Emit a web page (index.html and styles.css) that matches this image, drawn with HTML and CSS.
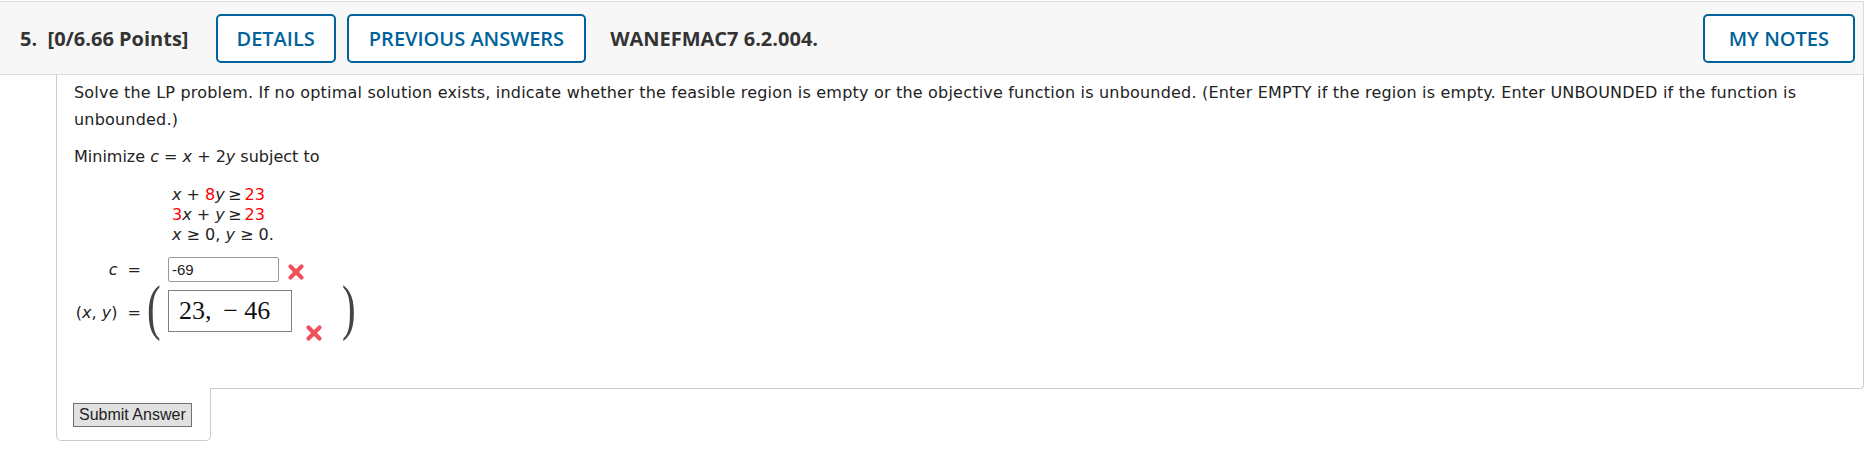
FILE: index.html
```
<!DOCTYPE html>
<html>
<head>
<meta charset="utf-8">
<link rel="stylesheet" href="styles.css">
</head>
<body>
<div class="q">
  <div class="qhead">
    <span class="qnum">5.&nbsp; [0/6.66 Points]</span>
    <button class="hbtn">DETAILS</button>
    <button class="hbtn prev">PREVIOUS ANSWERS</button>
    <span class="qcode">WANEFMAC7 6.2.004.</span>
    <button class="hbtn notes">MY NOTES</button>
  </div>
  <div class="qbody">
    <p class="intro">Solve the LP problem. If no optimal solution exists, indicate whether the feasible region is empty or the objective function is unbounded. (Enter EMPTY if the region is empty. Enter UNBOUNDED if the function is unbounded.)</p>
    <p class="minimize">Minimize <i>c</i> = <i>x</i> + 2<i>y</i> subject to</p>
    <div class="constraints">
      <div><i>x</i> + <span class="red">8</span><i>y</i>&thinsp;≥&thinsp;<span class="red">23</span></div>
      <div><span class="red">3</span><i>x</i> + <i>y</i>&thinsp;≥&thinsp;<span class="red">23</span></div>
      <div><i>x</i> ≥ 0, <i>y</i> ≥ 0.</div>
    </div>
    <div class="answers">
      <div class="lbl"><i>c</i>&nbsp; =</div>
      <div class="cell c-cell">
        <span class="cinput">-69</span>
        <svg class="xmark" width="18" height="18" viewBox="0 0 18 18"><path d="M3.5 3.5 L14.5 14.5 M14.5 3.5 L3.5 14.5" stroke="#f0505a" stroke-width="4.2" stroke-linecap="round"/></svg>
      </div>
      <div class="lbl lbl2">(<i>x</i>, <i>y</i>)&nbsp; =</div>
      <div class="cell xy-cell">
        <span class="paren">(</span>
        <span class="mathbox">23,&thinsp; − 46</span>
        <svg class="xmark xmark2" width="18" height="18" viewBox="0 0 18 18"><path d="M3.5 3.5 L14.5 14.5 M14.5 3.5 L3.5 14.5" stroke="#f0505a" stroke-width="4.2" stroke-linecap="round"/></svg>
        <span class="paren rparen">)</span>
      </div>
    </div>
  </div>
  <div class="submit-tab">
    <button class="submit">Submit Answer</button>
  </div>
</div>
</body>
</html>
```
FILE: styles.css
```
body {
  margin: 0;
  background: #fff;
}
.q {
  width: 1864px;
  margin-top: 1px;
}
.qhead {
  display: flex;
  align-items: center;
  height: 72px;
  background: #f7f7f7;
  border-top: 1px solid #ddd;
  border-right: 1px solid #ddd;
  border-bottom: 1px solid #ddd;
  padding-left: 20px;
  font-family: "Open Sans", sans-serif;
  color: #333;
}
.qnum {
  font-weight: 700;
  font-size: 20px;
  margin-right: 27px;
}
.hbtn {
  height: 49px;
  border: 2px solid #00629b;
  border-radius: 5px;
  background: #fff;
  color: #00629b;
  font-family: "Open Sans", sans-serif;
  font-weight: 600;
  font-size: 20px;
  padding: 0 19px;
  margin-right: 11px;
}
.hbtn.prev {
  padding: 0 20px;
}
.qcode {
  font-weight: 700;
  font-size: 20px;
  margin-left: 13px;
}
.hbtn.notes {
  margin-left: auto;
  margin-right: 8px;
  padding: 0 24px;
}
.qbody {
  margin-left: 56px;
  height: 314px;
  box-sizing: border-box;
  border-left: 1px solid #ccc;
  border-right: 1px solid #ccc;
  border-bottom: 1px solid #ccc;
  border-bottom-right-radius: 4px;
  padding: 4px 17px 0 17px;
  font-family: "DejaVu Sans", Verdana, sans-serif;
  font-size: 16px;
  color: #222;
}
.qbody p {
  margin: 0;
}
.intro {
  line-height: 27px;
  letter-spacing: 0.2px;
}
.minimize {
  line-height: 27px;
  margin-top: 10px !important;
}
.constraints {
  margin-top: 15px;
  margin-left: 98px;
  line-height: 20px;
}
.red {
  color: #f00;
}
.answers {
  display: grid;
  grid-template-columns: 73px auto;
  row-gap: 5px;
  margin-top: 12px;
  align-items: center;
}
.lbl {
  text-align: right;
  padding-right: 6px;
  white-space: nowrap;
}
.lbl2 {
  margin-top: -5px;
}
.cell {
  display: flex;
  align-items: center;
}
.c-cell {
  padding-left: 21px;
  height: 25px;
}
.cinput {
  box-sizing: border-box;
  width: 111px;
  height: 25px;
  border: 1px solid #999;
  border-radius: 2px;
  font-family: "Liberation Sans", Arial, sans-serif;
  font-size: 15px;
  line-height: 23px;
  padding-left: 3px;
  color: #222;
}
.xmark {
  margin-left: 8px;
  margin-top: 4px;
}
.xy-cell {
  height: 55px;
}
.paren {
  font-family: "Liberation Serif", serif;
  font-size: 62px;
  line-height: 55px;
  color: #444;
  width: 21px;
  display: inline-block;
  transform: translateY(-7px) scaleX(0.66);
  transform-origin: left center;
}
.mathbox {
  box-sizing: border-box;
  width: 124px;
  height: 42px;
  border: 1px solid #808080;
  font-family: "Liberation Serif", serif;
  font-size: 26px;
  line-height: 40px;
  padding-left: 10px;
  color: #111;
  margin-top: -8px;
}
.xmark2 {
  margin-left: 13px;
  align-self: flex-end;
  margin-bottom: 0;
}
.rparen {
  margin-left: 19px;
}
.submit-tab {
  margin-left: 56px;
  margin-top: -1px;
  width: 155px;
  height: 53px;
  box-sizing: border-box;
  background: #fff;
  border: 1px solid #ccc;
  border-top: none;
  border-radius: 0 0 5px 5px;
  padding: 15px 0 0 16px;
}
.submit {
  font-family: "Liberation Sans", Arial, sans-serif;
  font-size: 16px;
  color: #222;
  background: #e1e1e1;
  border: 1px solid #707070;
  border-radius: 0;
  padding: 1px 5px;
  height: 24px;
  line-height: 20px;
}
```
